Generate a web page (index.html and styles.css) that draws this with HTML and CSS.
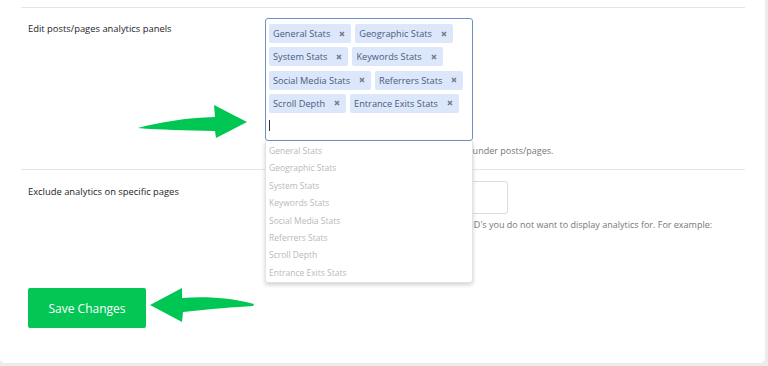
FILE: index.html
```html
<!DOCTYPE html>
<html>
<head>
<meta charset="utf-8">
<link rel="stylesheet" href="styles.css">
</head>
<body>
<div class="panel">
  <div class="form">
    <div class="row row-panels">
      <div class="label">Edit posts/pages analytics panels</div>
      <div class="field">
        <div class="select">
          <ul class="tags">
            <li class="tag">General Stats<span class="x"><svg viewBox="0 0 6 6"><path d="M1 1L5 5M5 1L1 5"/></svg></span></li>
            <li class="tag">Geographic Stats<span class="x"><svg viewBox="0 0 6 6"><path d="M1 1L5 5M5 1L1 5"/></svg></span></li>
            <li class="tag">System Stats<span class="x"><svg viewBox="0 0 6 6"><path d="M1 1L5 5M5 1L1 5"/></svg></span></li>
            <li class="tag">Keywords Stats<span class="x"><svg viewBox="0 0 6 6"><path d="M1 1L5 5M5 1L1 5"/></svg></span></li>
            <li class="tag">Social Media Stats<span class="x"><svg viewBox="0 0 6 6"><path d="M1 1L5 5M5 1L1 5"/></svg></span></li>
            <li class="tag">Referrers Stats<span class="x"><svg viewBox="0 0 6 6"><path d="M1 1L5 5M5 1L1 5"/></svg></span></li>
            <li class="tag">Scroll Depth<span class="x"><svg viewBox="0 0 6 6"><path d="M1 1L5 5M5 1L1 5"/></svg></span></li>
            <li class="tag">Entrance Exits Stats<span class="x"><svg viewBox="0 0 6 6"><path d="M1 1L5 5M5 1L1 5"/></svg></span></li>
          </ul>
          <div class="search"><span class="caret"></span></div>
        </div>
        <p class="desc">Select the analytics panels you want us to display under posts/pages.</p>
        <ul class="dropdown">
          <li>General Stats</li>
          <li>Geographic Stats</li>
          <li>System Stats</li>
          <li>Keywords Stats</li>
          <li>Social Media Stats</li>
          <li>Referrers Stats</li>
          <li>Scroll Depth</li>
          <li>Entrance Exits Stats</li>
        </ul>
      </div>
    </div>
    <div class="row row-exclude">
      <div class="label">Exclude analytics on specific pages</div>
      <div class="field">
        <div class="text-input"></div>
        <p class="desc">Enter comma separated list of the page and post ID's you do not want to display analytics for. For example:</p>
      </div>
    </div>
  </div>
  <div class="actions">
    <button class="save">Save Changes</button>
  </div>
  <svg class="arrow arrow-right" viewBox="0 0 125 50" width="125" height="50"><path d="M8 33 C30 27 55 23 85 22 L84 10 L117 27 L86 43 L85 36 C55 35 30 35 8 33 Z"/></svg>
  <svg class="arrow arrow-left" viewBox="0 0 120 50" width="120" height="50"><path d="M10 25 L42 8 L42 18 C70 16 95 19 114 24 L113 26 C95 27 70 29 43 32 L42 42 Z"/></svg>
</div>
</body>
</html>
```

FILE: styles.css
```css
* { box-sizing: border-box; }
html, body { margin: 0; padding: 0; }
body {
  background: #ececec;
  font-family: "Open Sans", "Noto Sans", sans-serif;
  width: 768px;
  height: 366px;
  overflow: hidden;
}
.panel {
  position: relative;
  width: 765px;
  height: 363px;
  background: #ffffff;
  border-radius: 0 0 5px 5px;
  padding: 7px 0 0 21px;
}
.form { width: 724px; }
.row {
  display: flex;
  border-top: 1px solid #e6e6e6;
}
.row-panels { padding: 10px 0 12px; }
.row-exclude { padding: 11px 0 0; }
.label {
  width: 244px;
  flex: none;
  padding: 5px 0 0 7px;
  font-size: 9.4px;
  line-height: 12px;
  color: #1d2327;
}
.field {
  position: relative;
  width: 208px;
}
.select {
  width: 208px;
  height: 123px;
  border: 1px solid #6f8fca;
  border-radius: 3px;
  padding: 5px 3px 0;
  background: #fff;
}
.tags {
  list-style: none;
  margin: 0;
  padding: 0;
  display: flex;
  flex-wrap: wrap;
  column-gap: 4px;
  row-gap: 4.33px;
}
.tag {
  display: flex;
  align-items: center;
  height: 19px;
  padding: 0 6px 0 4px;
  background: #dce7fb;
  border-radius: 2px;
  font-size: 9.2px;
  color: #4b5b7c;
  white-space: nowrap;
}
.x {
  display: flex;
  margin-left: 9px;
}
.x svg {
  width: 6px;
  height: 6px;
  stroke: #777d87;
  stroke-width: 1.6;
  fill: none;
}
.search {
  height: 27px;
  padding-top: 7px;
}
.caret {
  display: block;
  width: 1px;
  height: 11px;
  background: #333;
}
.desc {
  margin: 4px 0 0;
  font-size: 9px;
  line-height: 12px;
  color: #777;
  white-space: nowrap;
}
.row-exclude .desc { margin-top: 5px; }
.text-input {
  width: 243px;
  height: 33px;
  border: 1px solid #dcdcde;
  border-radius: 3px;
}
.dropdown {
  position: absolute;
  z-index: 2;
  left: 0;
  top: 123px;
  width: 208px;
  margin: 0;
  padding: 1px 0;
  list-style: none;
  background: #fff;
  border: 1px solid #e2e2e2;
  border-top: none;
  border-radius: 0 0 3px 3px;
  box-shadow: 0 2px 4px rgba(0,0,0,0.18);
}
.dropdown li {
  height: 17.4px;
  line-height: 17.4px;
  padding-left: 3px;
  font-size: 8.5px;
  color: #b9b9b9;
}
.actions {
  margin-top: 57px;
  padding-left: 7px;
}
.save {
  display: block;
  width: 118px;
  height: 40px;
  border: none;
  border-radius: 2px;
  background: #03c655;
  color: #fff;
  font-family: "Open Sans", "Noto Sans", sans-serif;
  font-size: 12px;
  padding: 0;
}
.arrow {
  position: absolute;
  fill: #00c653;
}
.arrow-right { left: 130px; top: 95px; }
.arrow-left { left: 140px; top: 280px; }
```
